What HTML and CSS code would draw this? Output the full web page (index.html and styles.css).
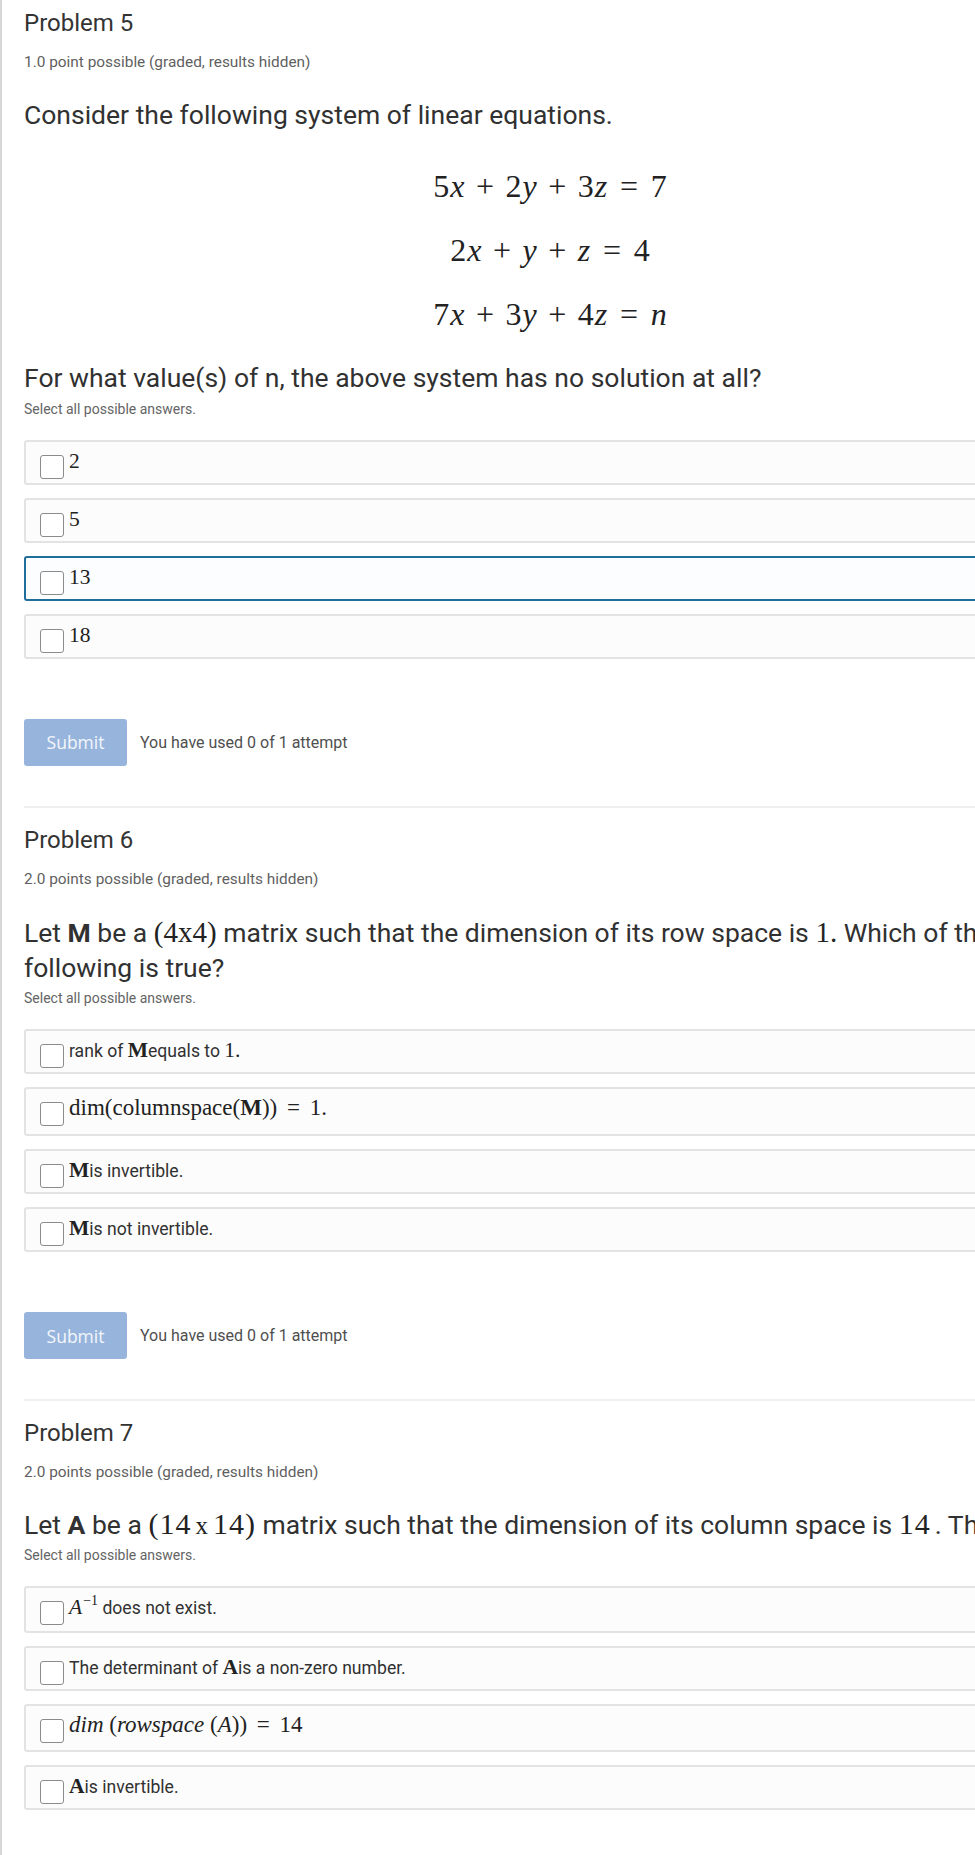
FILE: index.html
```html
<!DOCTYPE html>
<html lang="en">
<head>
  <meta charset="UTF-8">
  <meta name="viewport" content="width=device-width, initial-scale=1.0">
  <title>Linear Algebra - Problems</title>
  <link rel="stylesheet" href="styles.css">
</head>
<body>
  <div class="page">

    <div class="problem">
      <h3 class="problem-header">Problem 5</h3>
      <div class="problem-progress">1.0 point possible (graded, results hidden)</div>
      <p class="question">Consider the following system of linear equations.</p>
      <div class="display-math">
        <div class="eq"><span class="mn">5</span><span class="mi">x</span><span class="mo">+</span><span class="mn">2</span><span class="mi">y</span><span class="mo">+</span><span class="mn">3</span><span class="mi">z</span><span class="mo rel">=</span><span class="mn">7</span></div>
        <div class="eq"><span class="mn">2</span><span class="mi">x</span><span class="mo">+</span><span class="mi">y</span><span class="mo">+</span><span class="mi">z</span><span class="mo rel">=</span><span class="mn">4</span></div>
        <div class="eq"><span class="mn">7</span><span class="mi">x</span><span class="mo">+</span><span class="mn">3</span><span class="mi">y</span><span class="mo">+</span><span class="mn">4</span><span class="mi">z</span><span class="mo rel">=</span><span class="mi">n</span></div>
      </div>
      <p class="question after-math">For what value(s) of n, the above system has no solution at all?</p>
      <p class="hint">Select all possible answers.</p>
      <div class="choices">
        <label class="choice"><input type="checkbox" class="box"><span class="choice-text"><span class="m">2</span></span></label>
        <label class="choice"><input type="checkbox" class="box"><span class="choice-text"><span class="m">5</span></span></label>
        <label class="choice selected"><input type="checkbox" class="box"><span class="choice-text"><span class="m">13</span></span></label>
        <label class="choice"><input type="checkbox" class="box"><span class="choice-text"><span class="m">18</span></span></label>
      </div>
      <div class="action">
        <button class="submit" disabled>Submit</button>
        <span class="attempts">You have used 0 of 1 attempt</span>
      </div>
    </div>

    <hr class="divider">

    <div class="problem">
      <h3 class="problem-header">Problem 6</h3>
      <div class="problem-progress">2.0 points possible (graded, results hidden)</div>
      <p class="question two-line">Let <b>M</b> be a <span class="m-inline">(4x4)</span> matrix such that the dimension of its row space is <span class="m-inline">1.</span> Which of the following is true?</p>
      <p class="hint">Select all possible answers.</p>
      <div class="choices">
        <label class="choice"><input type="checkbox" class="box"><span class="choice-text">rank of <span class="m bold">M</span>equals to <span class="m">1.</span></span></label>
        <label class="choice tall"><input type="checkbox" class="box"><span class="choice-text"><span class="m wide">dim(columnspace(<b>M</b>)) <span class="rel-sm">=</span> 1.</span></span></label>
        <label class="choice"><input type="checkbox" class="box"><span class="choice-text"><span class="m bold">M</span>is invertible.</span></label>
        <label class="choice"><input type="checkbox" class="box"><span class="choice-text"><span class="m bold">M</span>is not invertible.</span></label>
      </div>
      <div class="action">
        <button class="submit" disabled>Submit</button>
        <span class="attempts">You have used 0 of 1 attempt</span>
      </div>
    </div>

    <hr class="divider">

    <div class="problem">
      <h3 class="problem-header">Problem 7</h3>
      <div class="problem-progress">2.0 points possible (graded, results hidden)</div>
      <p class="question one-line">Let <b>A</b> be a <span class="m-inline big">(14<span class="times">x</span>14)</span> matrix such that the dimension of its column space is <span class="m-inline big dot-gap">14</span>. Then which of the following is true?</p>
      <p class="hint">Select all possible answers.</p>
      <div class="choices">
        <label class="choice sup-row"><input type="checkbox" class="box"><span class="choice-text"><span class="m"><i>A</i><sup>&minus;1</sup></span> does not exist.</span></label>
        <label class="choice"><input type="checkbox" class="box"><span class="choice-text">The determinant of <span class="m bold">A</span>is a non-zero number.</span></label>
        <label class="choice tall-sm"><input type="checkbox" class="box"><span class="choice-text"><span class="m wide"><i>dim</i> (<i>rowspace</i> (<i>A</i>)) <span class="rel-sm">=</span> 14</span></span></label>
        <label class="choice"><input type="checkbox" class="box"><span class="choice-text"><span class="m bold">A</span>is invertible.</span></label>
      </div>
    </div>

  </div>
</body>
</html>
```

FILE: styles.css
```css
html, body {
  margin: 0;
  overflow-x: hidden;
}

body {
  font-family: Roboto, "Noto Sans", Arial, sans-serif;
  color: #313131;
  background: #fff;
}

.page {
  border-left: 2px solid #d6d6d6;
  min-height: 1855px;
  padding: 9px 0 40px 22px;
  box-sizing: border-box;
}

.problem {
  width: 1052px;
}

.problem-header {
  margin: 0;
  font-size: 24px;
  line-height: 28px;
  font-weight: 400;
  color: #333;
}

.problem-progress {
  margin-top: 15px;
  font-size: 15.4px;
  line-height: 20px;
  color: #5f5f5f;
}

.question {
  margin: 26px 0 0;
  font-size: 26.5px;
  line-height: 33.75px;
}

.question b {
  font-weight: 700;
}

.question.after-math {
  margin-top: 15.5px;
}

.question.two-line {
  line-height: 35px;
}

.one-line {
  white-space: nowrap;
}

/* math bits */
.display-math {
  margin-top: 22px;
  text-align: center;
  font-family: "Liberation Serif", "DejaVu Serif", serif;
  color: #222;
}

.eq {
  height: 64px;
  line-height: 64px;
  font-size: 32px;
}

.mi {
  font-style: italic;
}

.mi + .mn, .mn + .mi {
  margin-left: 1px;
}

.mo {
  margin: 0 0.36em;
}

.mo.rel {
  margin: 0 0.4em;
}

.m, .m-inline {
  font-family: "Liberation Serif", "DejaVu Serif", serif;
  color: #222;
}

.m {
  font-size: 21.5px;
}

.m.wide {
  font-size: 23px;
}

.m-inline {
  font-size: 29px;
  line-height: 1;
}

.m-inline.big {
  font-size: 30px;
  letter-spacing: 1px;
}

.times {
  margin: 0 4px;
  font-size: 25px;
}

.dot-gap {
  margin-right: 4px;
}

.m.bold, .m b {
  font-weight: 700;
}

.m sup {
  font-size: 14px;
  line-height: 0;
  vertical-align: 9px;
  margin-left: 1px;
}

.rel-sm {
  margin: 0 4px;
}

.hint {
  margin: 3.5px 0 0;
  font-size: 14px;
  line-height: 20px;
  color: #646464;
}

/* answer choices */
.choices {
  margin-top: 21px;
  display: flex;
  flex-direction: column;
  gap: 13px;
}

.choice {
  display: flex;
  align-items: flex-start;
  gap: 5px;
  padding: 6px 14px 4px;
  border: 2px solid #e3e3e3;
  border-radius: 3px;
  background: #fcfcfc;
  font-size: 17.6px;
  line-height: 26px;
  color: #313131;
}

.choice.selected {
  border-color: #1f6f9a;
  background: #fbfdfe;
}

.choice.tall {
  padding-bottom: 8px;
}

.choice.tall-sm {
  padding-bottom: 7px;
}

.choice.sup-row {
  padding-bottom: 6px;
}

.box {
  appearance: none;
  -webkit-appearance: none;
  flex-shrink: 0;
  width: 24px;
  height: 24px;
  margin: 7px 0 0;
  box-sizing: border-box;
  border: 1.5px solid #8b8b8b;
  border-radius: 3px;
  background: #fff;
}

/* submit row */
.action {
  margin-top: 60px;
  display: flex;
  align-items: center;
  gap: 13px;
}

.submit {
  width: 103px;
  height: 47px;
  padding: 0;
  border: none;
  border-radius: 3px;
  background: #97b5dc;
  color: #f3f6fb;
  font-family: "Open Sans", Roboto, sans-serif;
  font-size: 17.5px;
}

.attempts {
  font-size: 16px;
  color: #4f4f4f;
}

.divider {
  margin: 40px 0 18px;
  width: 1052px;
  border: 0;
  border-top: 2px solid #efefef;
}
```
